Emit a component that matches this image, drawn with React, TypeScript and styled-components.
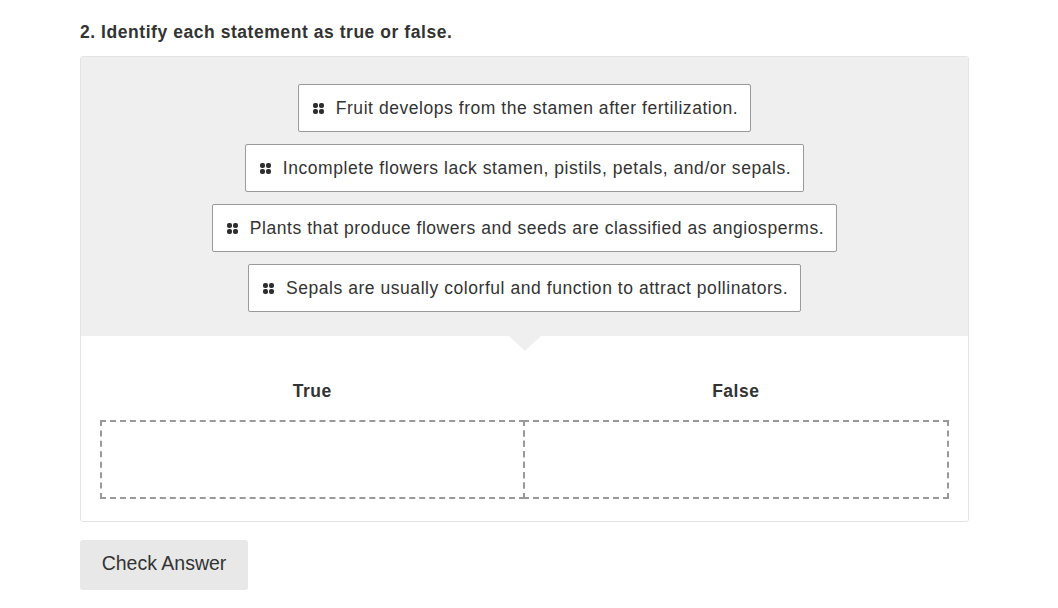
import styled, { createGlobalStyle } from 'styled-components';

const GlobalStyle = createGlobalStyle`
  body {
    margin: 0;
    background: #ffffff;
    font-family: "Liberation Sans", Arial, Helvetica, sans-serif;
    color: #333333;
  }
`;

const Page = styled.div`
  width: 889px;
  padding: 22px 0 0 80px;
`;

const Title = styled.h2`
  margin: 0 0 14px 0;
  font-size: 17.5px;
  letter-spacing: 0.55px;
  line-height: 20px;
  font-weight: 700;
  color: #333333;
`;

const Board = styled.div`
  border: 1px solid #e3e3e3;
  border-radius: 3px;
  overflow: hidden;
`;

const Pool = styled.div`
  background: #efefef;
  padding: 27px 0 24px;
  display: flex;
  flex-direction: column;
  align-items: center;
  gap: 12px;
`;

const Statement = styled.div`
  display: flex;
  align-items: center;
  gap: 12px;
  background: #ffffff;
  border: 1px solid #9a9a9a;
  border-radius: 2px;
  padding: 13px 12px 13px 14px;
  font-size: 17.5px;
  letter-spacing: 0.55px;
  line-height: 20px;
  color: #333333;
  cursor: move;
`;

const Grip = styled.span`
  display: grid;
  grid-template-columns: 5px 5px;
  grid-template-rows: 5px 5px;
  gap: 1px;
  margin-top: 1px;

  i {
    display: block;
    width: 5px;
    height: 5px;
    border-radius: 2px;
    background: #2e2e2e;
  }
`;

const Targets = styled.div`
  position: relative;
  background: #ffffff;
  padding: 45px 19px 22px;

  &::before {
    content: '';
    position: absolute;
    top: 0;
    left: 50%;
    margin-left: -16px;
    border-left: 16px solid transparent;
    border-right: 16px solid transparent;
    border-top: 15px solid #efefef;
  }
`;

const Columns = styled.div`
  display: grid;
  grid-template-columns: 1fr 1fr;
`;

const Column = styled.div<{ $right?: boolean }>`
  display: flex;
  flex-direction: column;
  margin-left: ${p => (p.$right ? '-2px' : '0')};
`;

const ColumnTitle = styled.div`
  text-align: center;
  font-size: 17.5px;
  letter-spacing: 0.5px;
  line-height: 20px;
  font-weight: 700;
  color: #333333;
  margin-bottom: 19px;
`;

const DropZone = styled.div`
  height: 75px;
  border: 2px dashed #999999;
`;

const CheckButton = styled.button`
  margin-top: 18px;
  width: 168px;
  height: 50px;
  padding: 0 0 3px;
  border: none;
  border-radius: 3px;
  background: #e8e8e8;
  font-family: "Liberation Sans", Arial, Helvetica, sans-serif;
  font-size: 19.5px;
  color: #333333;
  cursor: pointer;
`;

const statements = [
  'Fruit develops from the stamen after fertilization.',
  'Incomplete flowers lack stamen, pistils, petals, and/or sepals.',
  'Plants that produce flowers and seeds are classified as angiosperms.',
  'Sepals are usually colorful and function to attract pollinators.',
];

export default function App() {
  return (
    <>
      <GlobalStyle />
      <Page>
        <Title>2. Identify each statement as true or false.</Title>
        <Board>
          <Pool>
            {statements.map(s => (
              <Statement key={s}>
                <Grip>
                  <i />
                  <i />
                  <i />
                  <i />
                </Grip>
                {s}
              </Statement>
            ))}
          </Pool>
          <Targets>
            <Columns>
              <Column>
                <ColumnTitle>True</ColumnTitle>
                <DropZone />
              </Column>
              <Column $right>
                <ColumnTitle>False</ColumnTitle>
                <DropZone />
              </Column>
            </Columns>
          </Targets>
        </Board>
        <CheckButton>Check Answer</CheckButton>
      </Page>
    </>
  );
}
